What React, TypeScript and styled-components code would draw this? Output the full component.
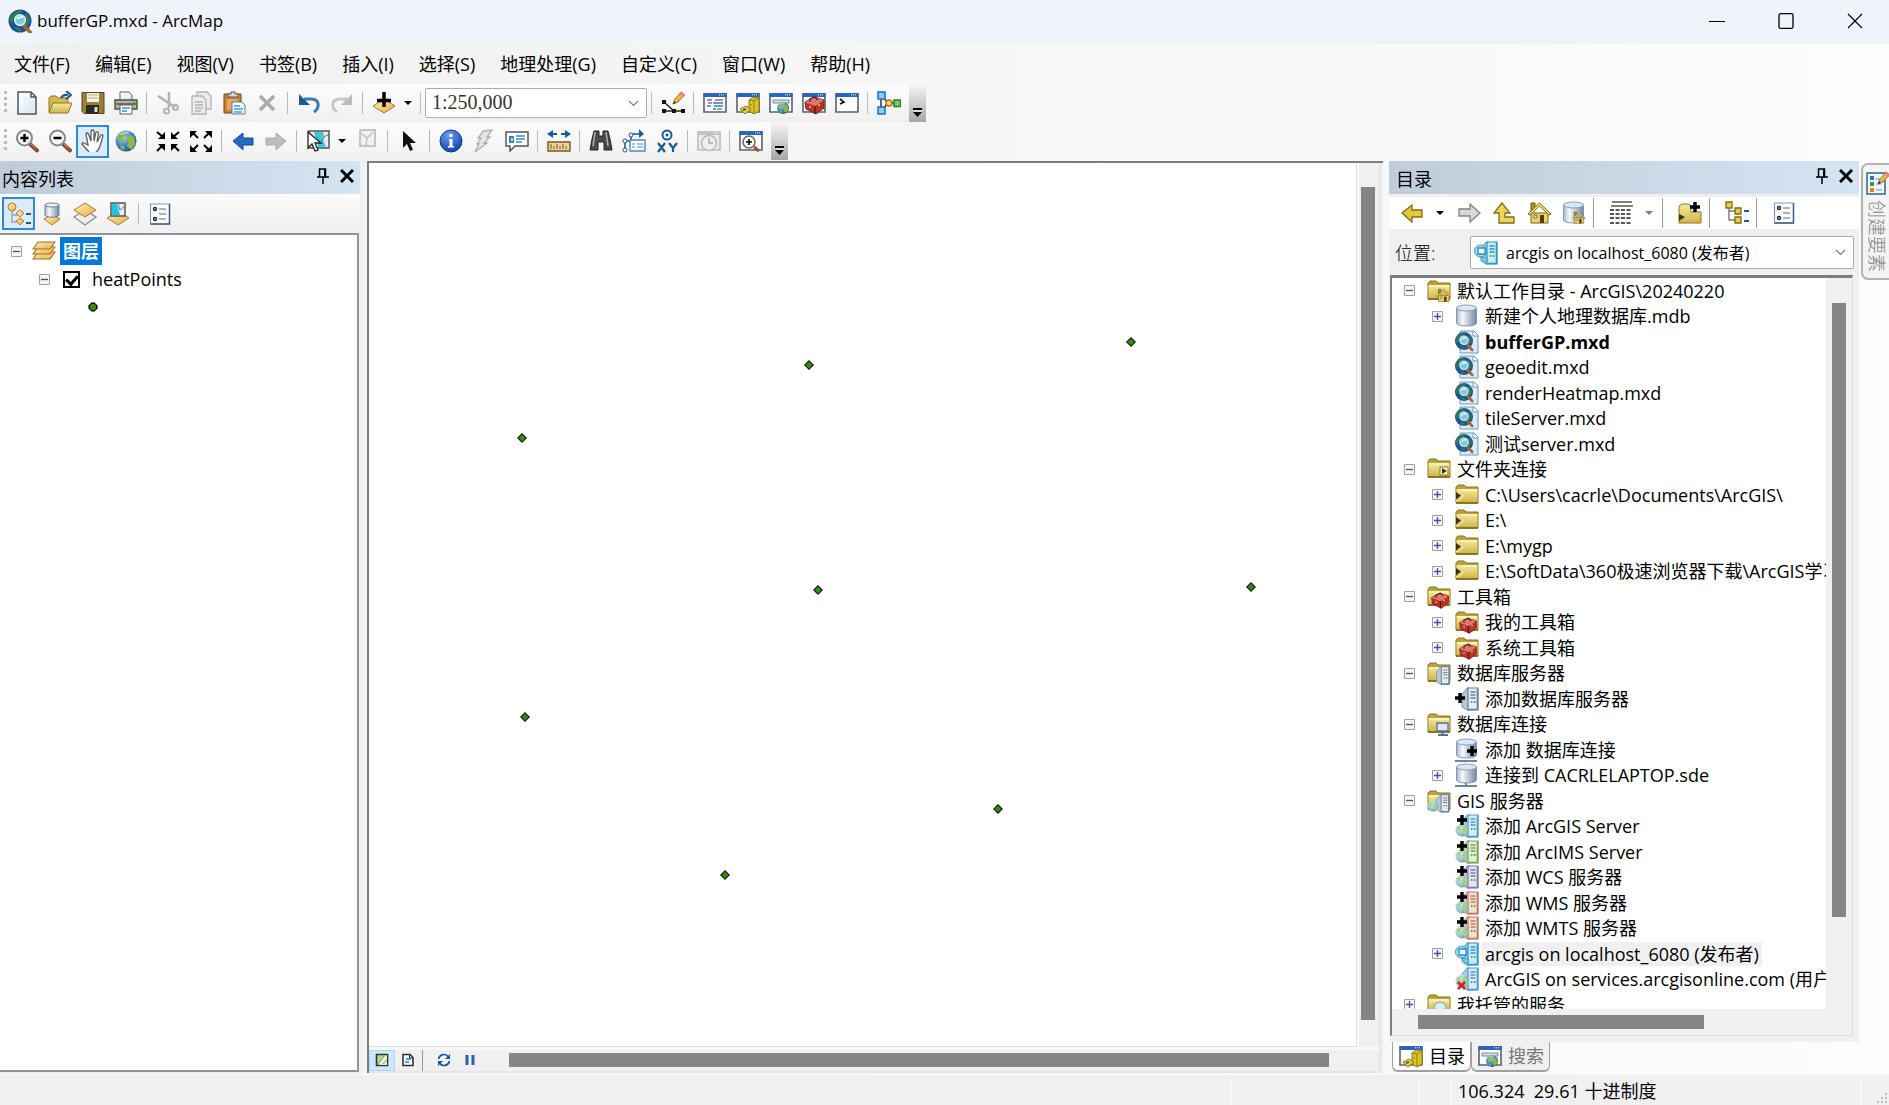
import React, { useState } from "react";
import styled, { createGlobalStyle, css } from "styled-components";

const UI = '"Open Sans", "Noto Sans CJK SC", sans-serif';
const NAVY = "#1c5a96";

const GlobalStyle = createGlobalStyle`
  * { box-sizing: border-box; }
  body { margin: 0; font-family: ${UI}; font-size: 18px; line-height: 24px; color: #000; }
  button, select, input { font: inherit; color: inherit; margin: 0; }
  svg { display: block; flex: none; }
`;

/* ---------- window chrome ---------- */

const Window = styled.div`
  height: 100vh;
  display: flex;
  flex-direction: column;
  overflow: hidden;
  background: linear-gradient(to right, #f0f0f0, #fcfcfc);
`;

const TitleBar = styled.header`
  height: 44px;
  flex: none;
  display: flex;
  align-items: center;
  padding: 0 0 3px 8px;
  background: #f0f3fb;
`;

const Title = styled.h1`
  flex: 1;
  margin: 0 0 0 5px;
  font-size: 17px;
  font-weight: 400;
`;

const WindowButton = styled.button`
  width: 69px;
  height: 40px;
  padding: 0;
  border: 0;
  background: none;
  display: flex;
  align-items: center;
  justify-content: center;
`;

const MenuBar = styled.nav`
  height: 40px;
  flex: none;
  display: flex;
  align-items: center;
  gap: 1px;
  padding-left: 2px;
`;

const MenuButton = styled.button`
  height: 36px;
  padding: 0 12px;
  border: 0;
  background: none;
  white-space: nowrap;
`;

/* ---------- toolbars ---------- */

const ToolbarArea = styled.div`
  flex: none;
  display: flex;
  flex-direction: column;
  align-items: flex-start;
  padding-bottom: 1px;
`;

const Toolbar = styled.div`
  height: 38px;
  display: flex;
  align-items: center;
  padding-left: 4px;
  background: linear-gradient(#fbfbfb, #fafafa 30%, #efefef);
`;

const Grip = styled.span`
  width: 3px;
  height: 24px;
  margin-right: 3px;
  background: repeating-linear-gradient(#bdbdbd 0 3px, transparent 3px 6px);
`;

const ToolButton = styled.button<{ $on?: boolean; $wide?: boolean }>`
  width: ${(p) => (p.$wide ? 35 : 33)}px;
  height: 33px;
  flex: none;
  padding: 0;
  display: flex;
  align-items: center;
  justify-content: center;
  border: 2px solid ${(p) => (p.$on ? "#2b8ae0" : "transparent")};
  background: ${(p) => (p.$on ? "#dcebf7" : "none")};
`;

const CaretButton = styled.button<{ $wide?: boolean; $dim?: boolean }>`
  width: ${(p) => (p.$wide ? 22 : 16)}px;
  height: 33px;
  padding: 0;
  border: 0;
  background: none;
  display: flex;
  align-items: center;
  justify-content: center;
  color: ${(p) => (p.$dim ? "#7c7c7c" : "#000")};
`;

const Separator = styled.span`
  width: 1px;
  height: 22px;
  margin: 0 4px;
  background: #b9b9b9;
`;

const Overflow = styled.button`
  width: 17px;
  height: 38px;
  margin-left: 4px;
  padding: 0 0 4px;
  border: 0;
  display: flex;
  align-items: flex-end;
  justify-content: center;
  background: linear-gradient(#f7f7f7, #a6a6a6);
`;

const ComboFrame = styled.div<{ $scale?: boolean }>`
  position: relative;
  display: flex;
  align-items: center;
  width: ${(p) => (p.$scale ? "222px" : "auto")};
  flex: ${(p) => (p.$scale ? "none" : "1")};
`;

const Combo = styled.select<{ $scale?: boolean }>`
  appearance: none;
  width: 100%;
  height: ${(p) => (p.$scale ? 30 : 33)}px;
  border: 1px solid #adadad;
  border-radius: 2px;
  background: #fff;
  ${(p) =>
    p.$scale
      ? css`
          padding: 0 24px 2px 6px;
          font-family: "Liberation Serif", "Noto Sans CJK SC", serif;
          font-size: 20px;
          color: #333;
        `
      : css`
          padding: 1px 24px 0 35px;
          font-size: 16px;
        `}
`;

const ComboIcon = styled.span`
  position: absolute;
  left: 4px;
  pointer-events: none;
`;

const ComboArrow = styled.span`
  position: absolute;
  right: 8px;
  pointer-events: none;
`;

/* ---------- docked panels ---------- */

const Workspace = styled.div`
  flex: 1;
  min-height: 0;
  display: flex;
`;

const ContentsPanel = styled.aside`
  width: 360px;
  flex: none;
  display: flex;
  flex-direction: column;
  margin-right: 7px;
  background: #f0f0f0;
`;

const CatalogPanel = styled.aside`
  width: 470px;
  flex: none;
  display: flex;
  flex-direction: column;
  margin: 0 2px 0 6px;
`;

const PanelHeader = styled.header<{ $inset?: boolean }>`
  height: 33px;
  flex: none;
  display: flex;
  align-items: center;
  padding: 3px 1px 0 ${(p) => (p.$inset ? 7 : 2)}px;
  background: linear-gradient(to right, #bfcddb, #d5e4f2);
`;

const PanelTitle = styled.h2`
  flex: 1;
  margin: 0;
  font-size: 18px;
  font-weight: 400;
`;

const HeaderButton = styled.button`
  width: 24px;
  height: 28px;
  padding: 0 0 6px;
  border: 0;
  background: none;
  display: flex;
  align-items: center;
  justify-content: center;
`;

const ContentsTools = styled.div`
  height: 39px;
  flex: none;
  display: flex;
  align-items: center;
  padding-left: 2px;
  background: linear-gradient(#fbfbfb, #efefef);
`;

const ContentsTree = styled.ul`
  flex: 1;
  margin: 0 1px 2px 0;
  padding: 2px 0 0;
  list-style: none;
  border: 2px solid #8e939c;
  border-left: 0;
  background: #fff;
`;

const ContentsRow = styled.li<{ $indent: number }>`
  height: 28px;
  display: flex;
  align-items: center;
  padding-left: ${(p) => p.$indent}px;
`;

const Expander = styled.button<{ $gap: number; $hidden?: boolean }>`
  width: 11px;
  height: 11px;
  flex: none;
  padding: 0;
  margin-right: ${(p) => p.$gap}px;
  border: 0;
  background: none;
  visibility: ${(p) => (p.$hidden ? "hidden" : "visible")};
`;

const SelectedLabel = styled.span`
  height: 28px;
  margin-left: 4px;
  padding: 2px 3px;
  background: #0078d7;
  color: #fff;
  font-weight: 700;
`;

const LayerLabel = styled.label`
  display: flex;
  align-items: center;
  gap: 12px;
`;

const LayerCheck = styled.input`
  appearance: none;
  width: 17px;
  height: 17px;
  display: grid;
  place-items: center;
  border: 2px solid #000;
  background: #fff;
  &:checked::before {
    content: "";
    width: 5px;
    height: 9px;
    margin-bottom: 3px;
    border: solid #000;
    border-width: 0 3px 3px 0;
    transform: rotate(42deg);
  }
`;

/* ---------- map view ---------- */

const MapFrame = styled.main`
  flex: 1;
  min-width: 0;
  margin-bottom: 1px;
  display: grid;
  grid-template-columns: 1fr 26px;
  grid-template-rows: 1fr 26px;
  border-left: 2px solid #7d7d7d;
  border-top: 2px solid #7d7d7d;
  background: #f0f0f0;
`;

const MapCanvas = styled.div`
  position: relative;
  overflow: hidden;
  background: #fff;
  border-right: 1px solid #dedede;
  border-bottom: 1px solid #dedede;
`;

const MapPoint = styled.span<{ $x: number; $y: number }>`
  position: absolute;
  left: ${(p) => p.$x}px;
  top: ${(p) => p.$y}px;
`;

const VerticalTrack = styled.div`
  display: flex;
  justify-content: center;
  margin-right: 2px;
  padding: 24px 2px 27px 0;
  border-left: 2px solid #fff;
  border-right: 2px solid #e3e3e3;
`;

const Thumb = styled.div`
  width: 14px;
  background: #858585;
`;

const ViewBar = styled.div`
  grid-column: 1 / 3;
  display: flex;
  align-items: center;
  height: 26px;
  margin-right: 2px;
  padding-bottom: 1px;
  border-top: 3px solid #f8f8f8;
  border-right: 2px solid #e3e3e3;
  border-bottom: 2px solid #e6e6e6;
`;

const ViewButton = styled.button<{ $on?: boolean }>`
  width: 26px;
  height: 21px;
  padding: 0;
  border: 1px solid ${(p) => (p.$on ? "#a6d8ff" : "transparent")};
  background: ${(p) => (p.$on ? "#cce8ff" : "none")};
  display: flex;
  align-items: center;
  justify-content: center;
`;

const ViewSeparator = styled.span`
  width: 1px;
  height: 21px;
  margin: 0 8px 0 1px;
  background: #9a9a9a;
`;

const HorizontalThumb = styled.div`
  flex: 1;
  height: 14px;
  margin: 0 50px 0 26px;
  background: #858585;
`;

/* ---------- catalog ---------- */

const CatalogBody = styled.div`
  flex: 1;
  min-height: 0;
  display: flex;
  flex-direction: column;
  padding-bottom: 6px;
  background: #f0f0f0;
`;

const CatalogTools = styled.div`
  height: 32px;
  flex: none;
  display: flex;
  align-items: center;
  margin-top: 3px;
  padding-left: 5px;
  background: #fff;
`;

const CatalogSeparator = styled.span`
  width: 1px;
  height: 30px;
  margin: 0 9px 0 2px;
  background: #9a9a9a;
`;

const LocationRow = styled.div`
  height: 46px;
  flex: none;
  display: flex;
  align-items: center;
  padding: 1px 5px 0 6px;
`;

const LocationLabel = styled.label`
  width: 75px;
  font-weight: 300;
`;

const CatalogFrame = styled.div`
  flex: 1;
  min-height: 0;
  margin: 0 6px 0 1px;
  display: grid;
  grid-template-columns: 1fr 26px;
  grid-template-rows: 1fr 26px;
  border: solid;
  border-width: 3px 1px 1px 2px;
  border-color: #7d7d7d #dedede #dedede #7d7d7d;
`;

const CatalogTree = styled.ul`
  min-width: 0;
  min-height: 0;
  margin: 0;
  padding: 0 0 0 12px;
  overflow: hidden;
  list-style: none;
  background: #fff;
`;

const CatalogRow = styled.li<{ $level: number }>`
  height: 25px;
  display: flex;
  align-items: center;
  padding-left: ${(p) => p.$level * 28}px;
  white-space: nowrap;
  &:nth-child(even) { height: 26px; }
`;

const RowLabel = styled.span<{ $bold?: boolean; $marked?: boolean }>`
  margin-left: 3px;
  padding: 0 3px;
  font-weight: ${(p) => (p.$bold ? 700 : 400)};
  background: ${(p) => (p.$marked ? "#f0f0f0" : "none")};
`;

const TreeTrack = styled.div`
  display: flex;
  justify-content: center;
  padding: 25px 0 92px;
`;

const TreeBottomTrack = styled.div`
  grid-column: 1 / 3;
  display: flex;
  align-items: center;
  padding: 0 148px 0 26px;
`;

const TreeBottomThumb = styled.div`
  flex: 1;
  height: 14px;
  background: #858585;
`;

const Tabs = styled.div`
  height: 32px;
  flex: none;
  display: flex;
  padding: 0 0 2px 3px;
`;

const Tab = styled.button<{ $on?: boolean }>`
  width: 79px;
  padding: 0 0 0 6px;
  display: flex;
  align-items: center;
  gap: 6px;
  border: 1px solid #a0a0a0;
  border-top: 0;
  border-bottom-width: 2px;
  border-radius: 0 0 6px 6px;
  background: ${(p) => (p.$on ? "#fff" : "#f0f0f0")};
  color: ${(p) => (p.$on ? "#000" : "#777")};
  white-space: nowrap;
`;

const SideStrip = styled.div`
  width: 28px;
  flex: none;
  padding-top: 2px;
`;

const SideTab = styled.button`
  width: 100%;
  height: 117px;
  padding: 6px 0 0 3px;
  display: flex;
  flex-direction: column;
  align-items: flex-start;
  gap: 5px;
  border: 2px solid #b2b2b2;
  border-right: 0;
  border-radius: 7px 0 0 7px;
  background: #f4f4f4;
  color: #808080;
`;

const SideText = styled.span`
  writing-mode: vertical-rl;
  text-orientation: sideways;
  line-height: 22px;
  font-weight: 300;
  white-space: nowrap;
`;

/* ---------- status bar ---------- */

const StatusBar = styled.footer`
  height: 31px;
  flex: none;
  display: flex;
  align-items: flex-end;
  background: #f0f0f0;
  border-top: 1px solid #f8f8f8;
`;

const StatusCell = styled.span<{ $width?: number }>`
  width: ${(p) => (p.$width ? `${p.$width}px` : "auto")};
  flex: ${(p) => (p.$width ? "none" : "1")};
  height: 26px;
  padding-left: 6px;
  border-right: 2px solid #f7f7f7;
  white-space: pre;
`;

const GripCell = styled.span`
  width: 27px;
  padding-left: 5px;
`;

/* ---------- icons ---------- */

const DefsSvg = styled.svg`
  position: absolute;
`;

const Svg = ({ children, s = 24, v = 24 }: { children: React.ReactNode; s?: number; v?: number }) => (
  <svg width={s} height={s} viewBox={`0 0 ${v} ${v}`} fill="none" aria-hidden="true">
    {children}
  </svg>
);

const Defs = () => (
  <DefsSvg width="0" height="0" aria-hidden="true">
    <defs>
      <radialGradient id="globe" cx="0.35" cy="0.3" r="0.8">
        <stop offset="0" stopColor="#a4dcf7" />
        <stop offset="0.5" stopColor="#4487cb" />
        <stop offset="1" stopColor="#1b4d8c" />
      </radialGradient>
      <radialGradient id="paleglobe" cx="0.35" cy="0.3" r="0.8">
        <stop offset="0" stopColor="#e3f4fb" />
        <stop offset="0.6" stopColor="#8fc1e0" />
        <stop offset="1" stopColor="#5b8fb8" />
      </radialGradient>
      <radialGradient id="blueball" cx="0.4" cy="0.25" r="0.8">
        <stop offset="0" stopColor="#6f9ff0" />
        <stop offset="1" stopColor="#0d3cae" />
      </radialGradient>
      <linearGradient id="gold" x1="0" y1="0" x2="0" y2="1">
        <stop offset="0" stopColor="#f5eaa0" />
        <stop offset="1" stopColor="#cfb54a" />
      </linearGradient>
      <linearGradient id="amber" x1="0" y1="0" x2="1" y2="1">
        <stop offset="0" stopColor="#fff0bd" />
        <stop offset="1" stopColor="#e9ac45" />
      </linearGradient>
      <linearGradient id="steel" x1="0" y1="0" x2="1" y2="0">
        <stop offset="0" stopColor="#a7b6cd" />
        <stop offset="0.3" stopColor="#f6f9fd" />
        <stop offset="1" stopColor="#7486a4" />
      </linearGradient>
      <linearGradient id="page" x1="0" y1="0" x2="1" y2="1">
        <stop offset="0" stopColor="#fff" />
        <stop offset="1" stopColor="#d3e6f5" />
      </linearGradient>
    </defs>
  </DefsSvg>
);

const Globe = ({ x = 12, y = 12, r = 10.5, pale }: { x?: number; y?: number; r?: number; pale?: boolean }) => (
  <g transform={`translate(${x} ${y}) scale(${r / 10})`}>
    <circle r="10" fill={pale ? "url(#paleglobe)" : "url(#globe)"} />
    <path
      d="M-8-4Q-4-9 1-8L0-5-3-3-2 0-5 2-7-1ZM3-6Q7-6 8-2L9 3 5 8 1 5 2 1-1-1 2-4ZM-6 4-2 5-1 8-4 8Z"
      fill={pale ? "#a9cf86" : "#86b94a"}
    />
    <path d="M-5-6Q-1-9 3-8" stroke="#fff" opacity=".5" strokeWidth="1.5" />
  </g>
);

const Magnifier = () => (
  <>
    <path d="m15.5 15.5 6.5 6" stroke="#8d4a32" strokeWidth="4" strokeLinecap="round" />
    <path d="m16 15 5 4.5" stroke="#d79a7c" strokeWidth="1" />
    <circle cx="9.5" cy="9" r="7.5" fill="#f4f6f7" stroke="#868b8d" strokeWidth="2" />
  </>
);

const MiniWindow = ({ dim }: { dim?: boolean }) => (
  <>
    <path d="M1 3h22v18H1Z" fill={dim ? "#ececec" : "#fff"} stroke={dim ? "#bcbcbc" : "#5d6269"} strokeWidth="1.6" />
    <path d="M.5 2h23v4H.5Z" fill={dim ? "#c2c2c2" : "#2c63bd"} />
    <path d="M16 3.8h6" stroke="#fff" strokeDasharray="1 1" />
  </>
);

const Cabinet = () => (
  <>
    <path d="m13 9 4-3 6 1v13l-5 3-5-3Z" fill="#dcc329" stroke="#8a7912" />
    <path d="m13 9 5 1 5-3M18 10v13M15 13v2" stroke="#94820f" />
    <path d="m4 18 6-3 5 3-6 5Z" fill="#e6d23a" stroke="#8a7912" />
    <path d="m7 19 3-1" stroke="#444" strokeWidth="1.5" />
  </>
);

const RedBox = ({ x = 0, y = 0, k = 1 }: { x?: number; y?: number; k?: number }) => (
  <g transform={`translate(${x} ${y}) scale(${k})`}>
    <path d="m3 11 9-5 10 3v8l-8 6-10-5Z" fill="#b93329" stroke="#7c1d17" />
    <path d="m3 11 10 4 9-6-10-3Z" fill="#e0796d" />
    <path d="M13 15v8M8 11V8l5-2 3 3" stroke="#4a1b18" strokeWidth="1.3" />
    <path d="M8 15v2M17 13v2" stroke="#f3c5bf" strokeWidth="1.3" />
  </g>
);

const Folder = ({ open }: { open?: boolean }) => (
  <>
    <path d="M1 5V4l2-2h6l2 2h12v16H1Z" fill="#bba339" stroke="#85721f" />
    <path d="M1.5 9.5V6h21v13.5h-21Z" fill="url(#gold)" />
    <path d={open ? "M7 7h15" : "M2 7h20"} stroke="#fff9c9" strokeWidth="1.5" />
    <path d="M1 20h22" stroke="#7a681b" strokeWidth="1.6" />
  </>
);

const Server = ({ tint = "#4f98cc", fill = "#d8edfb" }: { tint?: string; fill?: string }) => (
  <>
    <path d="m7 7 5-6h3v22h-3l-5-3Z" fill={fill} stroke={tint} strokeWidth=".8" />
    <path d="m7 7 5-6h3v22h-3l-5-3Z" fill={tint} opacity=".35" />
    <path d="M13 1h10v22H13Z" fill={fill} stroke={tint} strokeWidth="1.2" />
    <path d="M22.5 1.5v21M13 22.5h10" stroke={tint} strokeWidth="1.6" />
    <path d="M15.500 5h5M15.500 8h5M15.500 11h5" stroke={tint} strokeWidth="1.3" />
    <path d="M16 15h1.500M19 15h1.500" stroke="#3aab3a" strokeWidth="2" />
  </>
);

const Plus = ({ x, y, r = 5 }: { x: number; y: number; r?: number }) => (
  <path d={`M${x - r} ${y}h${r * 2}M${x} ${y - r}v${r * 2}`} stroke="#000" strokeWidth="3.400" />
);

const Cylinder = ({ h = 22 }: { h?: number }) => (
  <>
    <path d={`M1.5 4v${h - 7}c0 4 20 4 20 0V4Z`} fill="url(#steel)" stroke="#8495ae" />
    <ellipse cx="11.5" cy="4" rx="10" ry="3" fill="#dce6f3" stroke="#8a9bb4" />
  </>
);

const House = ({ x = 0, y = 0, k = 1 }: { x?: number; y?: number; k?: number }) => (
  <g transform={`translate(${x} ${y}) scale(${k})`}>
    <path d="M4 11V2h4v6" fill="#b08c2c" stroke="#6d5712" />
    <path d="M4 12h17v10H4Z" fill="#ead168" stroke="#796412" />
    <path d="M1 13 12.5 2 24 13l-2 1-9.500-9L3 14Z" fill="#f4df86" stroke="#796412" />
    <path d="M13 14h4v8h-4Z" fill="#4e3c0c" />
    <path d="M7 14h3v3H7Z" fill="#fff" stroke="#796412" />
  </g>
);

const Diamond = ({ y = 0 }: { y?: number }) => (
  <path d={`M1 ${10 + y} 12 ${3 + y} 23 ${10 + y} 12 ${17 + y}Z`} fill="url(#amber)" stroke="#a87b2c" />
);

const Doc = () => (
  <>
    <path d="M5 1h14l4 4v18H5Z" fill="#d9ecf7" stroke="#6b99b5" />
    <path d="M18 1v5h5" fill="#fff" stroke="#6b99b5" />
  </>
);

const ArcGlobe = ({ x = 12, y = 12, r = 11.5 }: { x?: number; y?: number; r?: number }) => (
  <g transform={`translate(${x} ${y}) scale(${r / 12})`}>
    <circle r="12" fill="#1a5393" />
    <path d="M-10-5Q-5-12 3-11L0-8-7-2-8 4Q-12 1-10-5ZM6-9Q11-5 10 2L6 6 5 0ZM-6 6 1 8 2 11Q-3 11-6 6Z" fill="#2f7a5e" />
    <path d="m4 5 7 7" stroke="#a8623a" strokeWidth="3.5" strokeLinecap="round" />
    <circle cx="0" cy="-1" r="5.500" fill="#7cc9e2" stroke="#d5e8f0" strokeWidth="1.8" />
    <path d="M-3-2Q-1-5 3-4" stroke="#fff" strokeWidth="1.6" />
  </g>
);

const Pencil = () => (
  <>
    <path d="m12 13 2-5 6-7 3.5 3-6.500 7Z" fill="#edb64b" stroke="#9c7430" />
    <path d="m18.500 2.500 2-2 3.500 3-2 2Z" fill="#e5817a" />
    <path d="m12 13 1-3 2 2Z" fill="#333" />
  </>
);

const ListDoc = () => (
  <>
    <path d="M2.500 2h19v20h-19Z" fill="#fbfcfe" stroke="#8799b0" strokeWidth="1.2" />
    <path d="M21.500 2v20h-19" stroke="#3f5b80" strokeWidth="1.4" />
    <circle cx="7" cy="7" r="1.500" stroke="#222" strokeWidth="1.4" />
    <circle cx="7" cy="17" r="1.500" stroke="#222" strokeWidth="1.4" />
    <path d="M11 7h7M11 12h7M11 17h7" stroke="#8c9aae" strokeWidth="1.4" />
  </>
);

const ArcServer = ({ tint, fill }: { tint: string; fill: string }) => (
  <>
    <Server tint={tint} fill={fill} />
    <Globe x={7} y={16} r={6.5} pale />
    <Plus x={7} y={6} />
  </>
);

const Publisher = () => (
  <>
    <Server tint="#2f96c8" fill="#c9ecfb" />
    <circle cx="6.500" cy="10" r="6" fill="#9fdaf0" stroke="#3b9cc8" />
    <path d="M4 7h7v6H4Z" fill="#f0fbff" stroke="#2c8cba" strokeWidth="1.3" />
    <path d="m6 16 5 5h2v-4Z" fill="#8fd0ea" stroke="#3b9cc8" />
  </>
);

const icons: Record<string, React.ReactNode> = {
  app: <ArcGlobe />,
  new: <path d="M3 1h13l5 5v17H3Z M16 1v5h5" fill="url(#page)" stroke="#4e565e" strokeWidth="1.5" />,
  open: (
    <>
      <path d="M1 21V7l2-2h5l2 2h10v14Z" fill="#d6bb4c" stroke="#8c7626" />
      <path d="m1 22 4-10h19l-4 10Z" fill="url(#gold)" stroke="#8c7626" />
      <path d="M13 7q2-4 7-3M18 0l5 4-5 4" stroke={NAVY} strokeWidth="2.2" />
    </>
  ),
  save: (
    <>
      <path d="M1 1.500h22v21H3l-2-2Z" fill="#9a8034" stroke="#4f4423" />
      <path d="M6 2h12v9H6Z" fill="#f4f1df" />
      <path d="M7 4h10M7 7h10" stroke="#b8b49d" />
      <path d="M5 14h13v8.500H5Z" fill="#27282a" />
      <path d="M13.500 16h3v5h-3Z" fill="#ddd" />
    </>
  ),
  print: (
    <>
      <path d="M6 10V1h9l3 3v6Z" fill="url(#page)" stroke="#59616a" />
      <path d="M1 9h22v9H1Z" fill="#b7b79f" stroke="#50513f" strokeWidth="1.4" />
      <path d="M1 13h22" stroke="#6b6c59" strokeWidth="2" />
      <path d="M6 14h12v9H6Z" fill="#fff" stroke="#59616a" />
      <path d="M8 17h8M8 20h5" stroke="#3b8bd0" strokeWidth="1.5" />
      <path d="M19 11h2" stroke="#44c044" strokeWidth="1.5" />
    </>
  ),
  cut: (
    <g stroke="#b3b3b3" strokeWidth="2">
      <path d="M13 1v16M2 5l17 11" strokeWidth="2.500" />
      <circle cx="10.500" cy="20" r="2.500" />
      <circle cx="19.500" cy="16.500" r="2.500" />
    </g>
  ),
  copy: (
    <g fill="#ececec" stroke="#b3b3b3" strokeWidth="1.3">
      <path d="M8 1h10l4 4v13H8Z" />
      <path d="M3 5h10l4 4v14H3Z" />
      <path d="M6 11h8M6 14h8M6 17h8M6 20h6" />
    </g>
  ),
  paste: (
    <>
      <path d="M2 3h17v19H2Z" fill="#c8803a" stroke="#75461b" />
      <path d="M6 6V3h3V1h4v2h3v3Z" fill="#d8dadd" stroke="#54585c" />
      <path d="M5 8h11v11H5Z" fill="#e3a868" />
      <path d="M10 11h10l3 3v9H10Z" fill="#f4faff" stroke="#4e7ea8" />
      <path d="M12 15h6M12 18h9M12 21h8" stroke="#4a98d4" strokeWidth="1.3" />
    </>
  ),
  remove: <path d="m5 5 14 14M19 5 5 19" stroke="#a9a9a9" strokeWidth="3.500" />,
  undo: (
    <>
      <path d="M7 8h7c9 0 9 9 3 13" stroke="#3d79b5" strokeWidth="3" />
      <path d="M2 3v11h11Z" fill={NAVY} />
    </>
  ),
  redo: (
    <>
      <path d="M17 8h-7c-9 0-9 9-3 13" stroke="#c6c6c6" strokeWidth="3" />
      <path d="M22 3v11H11Z" fill="#bcbcbc" />
    </>
  ),
  addData: (
    <>
      <Diamond y={5} />
      <path d="M5 9.500h14M12 1v15" stroke="#000" strokeWidth="3.500" />
    </>
  ),
  editor: (
    <>
      <path d="M3 11 13 20M3 20h20" stroke="#222" strokeWidth="1.5" />
      <path d="M1 9h4v4H1ZM1 18h4v4H1ZM11 18h4v4h-4ZM20 18h4v4h-4Z" fill="#111" />
      <Pencil />
    </>
  ),
  toc: (
    <>
      <MiniWindow />
      <path d="M4 9h5M10 12h10M4 15h4M11 15h9M10 18h3" stroke="#2d7bc6" strokeWidth="1.5" />
      <path d="M12 9h8M5 12h4" stroke="#d65050" strokeWidth="1.5" />
      <path d="M14 18h5" stroke="#4aa84a" strokeWidth="1.5" />
    </>
  ),
  catalog: (
    <>
      <MiniWindow />
      <Cabinet />
    </>
  ),
  search: (
    <>
      <MiniWindow />
      <path d="M4 9h16v3H4Z" fill="#d9e0e8" stroke="#7e8997" />
      <Globe x={14} y={17} r={6} />
    </>
  ),
  toolbox: (
    <>
      <MiniWindow />
      <RedBox />
    </>
  ),
  python: (
    <>
      <MiniWindow />
      <path d="m5 8 4 3-4 2" stroke="#111" strokeWidth="1.6" />
    </>
  ),
  model: (
    <>
      <path d="M4 5v14M5 5l6 7h9M5 19l6-7" stroke="#333" strokeWidth="1.5" />
      <path d="M1 1h7v7H1ZM1 16h7v7H1Z" fill="#8cc8f2" stroke="#1f6fb4" strokeWidth="1.5" />
      <circle cx="12" cy="12" r="3" fill="#ffdc60" stroke="#a5781a" strokeWidth="1.5" />
      <path d="M17 9h6.500v6.500H17Z" fill="#7dd06a" stroke="#2d7d24" strokeWidth="1.5" />
    </>
  ),
  zoomIn: (
    <>
      <Magnifier />
      <path d="M5.500 9h8M9.500 5v8" stroke="#000" strokeWidth="2.500" />
    </>
  ),
  zoomOut: (
    <>
      <Magnifier />
      <path d="M5.500 9h8" stroke="#000" strokeWidth="2.500" />
    </>
  ),
  pan: (
    <path
      d="M8 23 1 15q0-2 2-1l4 2L5 5q1-2 2.500 0L10 12V2q1.500-2 3 0v10l2-9q2-1 2.500 1L16 13l4-7q2-1 2 1l-3 10q-1 4-4 6"
      fill="#fff"
      stroke="#5d5d5d"
      strokeWidth="1.3"
    />
  ),
  globe: <Globe />,
  fixedIn: (
    <>
      <path d="m1 3 6 5M23 3l-6 5M1 22l6-6M23 22l-6-6" stroke="#000" strokeWidth="2" />
      <path d="M9 3v7H2ZM15 3v7h7ZM9 22v-7H2ZM15 22v-7h7Z" fill="#000" />
    </>
  ),
  fixedOut: (
    <>
      <path d="m3 3 6 6M21 3l-6 6M3 22l6-6M21 22l-6-6" stroke="#000" strokeWidth="2" />
      <path d="M1 9V2h7ZM23 9V2h-7ZM1 16v7h7ZM23 16v7h-7Z" fill="#000" />
    </>
  ),
  prev: <path d="M2 12 12 4v5h10v7H12v5Z" fill="#2469bf" stroke="#174a93" />,
  next: <path d="M22 12 12 4v5H2v7h10v5Z" fill="#bcbcbc" stroke="#aeaeae" />,
  select: (
    <>
      <path d="M3 2h20v17H3Z" fill="#e7ebec" stroke="#4f5457" strokeWidth="1.5" />
      <path d="M8 3h8l1 8 3 7h-8Z" fill="#35c7e4" />
      <path d="m16 3 2 5 5-3M18 8l-2 5" stroke="#6d7477" />
      <path d="M2 3v16l4-4 3 7 3-1-3-7h6Z" fill="#fff" stroke="#222" strokeWidth="1.3" />
    </>
  ),
  clear: (
    <>
      <path d="M5 1h15v16H5Z" fill="#f1f1f1" stroke="#b5b5b5" strokeWidth="1.5" />
      <path d="m6 4 6 5 6-6M12 9l-1 8" stroke="#bdbdbd" strokeWidth="1.3" />
    </>
  ),
  pointer: <path d="M6 2v17l4-4 3 7 3-1.500-3-6.500h6Z" fill="#111" />,
  info: (
    <>
      <circle cx="12" cy="12" r="11" fill="url(#blueball)" stroke="#163c8c" />
      <path d="M10 10h3.500v7H15v1.500H9V17h1.500v-5.500H10Z" fill="#fff" />
      <circle cx="12" cy="6.500" r="1.8" fill="#fff" />
    </>
  ),
  bolt: <path d="m11 2 9-1-5 7h3l-6 6h3L3 23l4-8H5l4-6H6Z" fill="#e6e6e6" stroke="#b0b0b0" strokeWidth="1.3" />,
  popup: (
    <>
      <path d="M1 3h22v14H10l-5 5v-5H1Z" fill="#fff" stroke="#51565b" strokeWidth="1.5" />
      <path d="M4 7h5v7H4Z" fill="#377fc4" />
      <path d="M6 9h2v3H6Z" fill="#ffd95b" />
      <path d="M11 7h9M11 10h9M11 13h6" stroke="#3c86c9" strokeWidth="1.4" />
    </>
  ),
  measure: (
    <>
      <path d="M2 5h20" stroke={NAVY} strokeWidth="2" strokeDasharray="8 4" />
      <path d="M0 5 6 1v8ZM24 5l-6-4v8Z" fill={NAVY} />
      <path d="M1 13h22v9H1Z" fill="#eed29c" stroke="#7a5523" strokeWidth="1.4" />
      <path d="M4 15v5M7 17v3M10 15v5M13 17v3M16 15v5M19 17v3" stroke="#7a5523" />
    </>
  ),
  find: (
    <>
      <path d="M5 2h5v5h4V2h5l2 8 2 11h-8v-8h-6v8H1l2-11Z" fill="#4b4b4b" stroke="#222" />
      <path d="M6 3 4 17M17 3l2 14" stroke="#b0b0b0" strokeWidth="1.5" />
    </>
  ),
  route: (
    <>
      <path d="M3 21v-9h6V5h10" stroke={NAVY} strokeWidth="1.6" />
      <path d="m17 0 5 5-5 4Z" fill={NAVY} />
      <circle cx="3" cy="21" r="2" fill="#fff" stroke={NAVY} />
      <circle cx="3" cy="12" r="2" fill="#fff" stroke={NAVY} />
      <circle cx="9" cy="6" r="2" fill="#fff" stroke={NAVY} />
      <path d="M8 11h15v11H8Z" fill="#f5faff" stroke="#5a87b0" strokeWidth="1.4" />
      <path d="M10 15h3M15 15h6M10 18h3M15 18h6" stroke="#5a87b0" />
    </>
  ),
  xy: (
    <>
      <circle cx="12" cy="6" r="4.500" stroke={NAVY} strokeWidth="2" />
      <circle cx="12" cy="6" r="1.500" fill={NAVY} />
      <path d="m3 14 7 9M10 14l-7 9M14 14l4 5 4-5M18 18v5" stroke={NAVY} strokeWidth="2.2" />
    </>
  ),
  time: (
    <>
      <MiniWindow dim />
      <circle cx="12" cy="14" r="7.500" fill="#eee" stroke="#bbb" strokeWidth="1.5" />
      <path d="M12 9v5h4" stroke="#aaa" strokeWidth="1.4" />
    </>
  ),
  viewer: (
    <>
      <MiniWindow />
      <path d="m15 18 5 4" stroke="#9b4e34" strokeWidth="3" />
      <circle cx="10" cy="13" r="6" fill="#f4f6f7" stroke="#666" strokeWidth="1.5" />
      <path d="M7 13h6M10 10v6" stroke="#000" strokeWidth="1.6" />
    </>
  ),
  byOrder: (
    <>
      <path d="M5 6v14h7M5 13h7" stroke="#8fa8bd" strokeWidth="1.4" />
      <circle cx="5" cy="5" r="4" fill="url(#amber)" stroke="#ad822d" />
      <path d="m9 11 4-3 4 3-4 4ZM9 19l4-3 4 3-4 4Z" fill="url(#amber)" stroke="#ad822d" />
      <path d="M19 12h5M19 21h5" stroke={NAVY} strokeWidth="2" />
    </>
  ),
  bySource: (
    <>
      <path d="m4 17 8-4 8 4-8 6Z" fill="url(#amber)" stroke="#a87b2c" />
      <path d="M5 3v10c0 3 14 3 14 0V3Z" fill="url(#steel)" stroke="#70819a" />
      <ellipse cx="12" cy="3" rx="7" ry="2" fill="#e7eef7" stroke="#70819a" />
    </>
  ),
  byVisibility: (
    <>
      <path d="m1 15 11-7 11 7-11 8Z" fill="#eee" stroke="#8c8c8c" strokeWidth="1.3" />
      <Diamond y={-2} />
    </>
  ),
  bySelection: (
    <>
      <Diamond y={6} />
      <path d="M5 1h14v13H5Z" fill="#eceeee" stroke="#50565a" strokeWidth="1.5" />
      <path d="M6 2h5l3 11H6Z" fill="#22c4e6" />
      <path d="m12 2 2 6 5-4" stroke="#777" />
    </>
  ),
  options: <ListDoc />,
  layers: (
    <g fill="url(#amber)" stroke="#a0702a" strokeWidth="1.1">
      <path d="m1 20 5-7h17l-5 7Z" />
      <path d="m1 15 5-7h17l-5 7Z" />
      <path d="m1 10 5-7h17l-5 7Z" />
    </g>
  ),
  backGold: <path d="M2 12 12 4v5h10v7H12v5Z" fill="#e2c83b" stroke="#806c13" strokeWidth="1.3" />,
  forwardGrey: <path d="M23 12 13 3v5H2v7h11v6Z" fill="#d8d8d8" stroke="#838383" strokeWidth="1.3" />,
  upGold: <path d="M10 2 2 12h5v10h15v-6H13v-4h5Z" fill="#ecd65a" stroke="#806c13" strokeWidth="1.3" />,
  home: <House />,
  homeDb: (
    <>
      <Cylinder />
      <House x={10} y={10} k={0.56} />
    </>
  ),
  grid: (
    <>
      <path d="M3 1h20M2 5h22" stroke="#555" strokeWidth="1.5" />
      <path d="M1 9h22M1 13h22M1 17h22M1 22h22" stroke="#555" strokeWidth="2" strokeDasharray="4 1.5" />
    </>
  ),
  newFolder: (
    <>
      <path d="M1 22V5l3-2h7l2 3v5h10v11Z" fill="url(#gold)" stroke="#8b7721" />
      <path d="m1 13 6 3-6 4Z" fill="#3c3510" />
      <Plus x={17} y={6} />
    </>
  ),
  treeView: (
    <>
      <path d="M4 7v12h7M4 10h7" stroke="#777" strokeWidth="1.4" />
      <path d="M1 1h6v6H1ZM10 7h6v6h-6ZM10 16h6v6h-6Z" fill="#e7cb50" stroke="#806c13" strokeWidth="1.3" />
      <path d="M19 10h5M19 20h5" stroke={NAVY} strokeWidth="2" />
    </>
  ),
  create: (
    <>
      <path d="M1 2h18v21H1Z" fill="#eef6fb" stroke="#33637f" strokeWidth="1.5" />
      <path d="M4 5h4v4H4Z" fill="#2f76b5" />
      <path d="M4 11h4v4H4Z" fill="#3c9c47" />
      <path d="M4 17h4v4H4Z" fill="#de7e30" />
      <path d="M10 8h5M10 13h5M10 19h6" stroke="#5c98bf" />
      <Pencil />
    </>
  ),
  folderHome: (
    <>
      <Folder />
      <House x={9} y={9} k={0.62} />
    </>
  ),
  mdb: <Cylinder />,
  mxd: (
    <>
      <Doc />
      <ArcGlobe x={9} y={11} r={9} />
    </>
  ),
  folderGroup: (
    <>
      <Folder />
      <path d="M13 10h8v8h-8Z" fill="#fff8d0" stroke="#8b7721" />
      <path d="m15 11 5 3-5 3Z" fill="#3c3510" />
    </>
  ),
  folder: (
    <>
      <Folder open />
      <path d="m1 9 5 3.500-5 4Z" fill="#3c3510" />
      <path d="M1 18q6-1 7-6" stroke="#fff8d0" />
    </>
  ),
  folderTools: (
    <>
      <Folder />
      <RedBox x={2} y={3} k={0.88} />
    </>
  ),
  folderServer: (
    <>
      <Folder />
      <g transform="translate(4 5) scale(.8)">
        <Server tint="#6c7f9c" fill="#e4ebf4" />
      </g>
    </>
  ),
  addServer: (
    <>
      <Server tint="#6c7f9c" fill="#e4ebf4" />
      <Plus x={5} y={11} />
    </>
  ),
  folderDb: (
    <>
      <Folder />
      <path d="M10 11h11v8H10Z" fill="#dce8f4" stroke="#596f8f" strokeWidth="1.3" />
      <path d="M15.500 19v3M11 23h10" stroke="#596f8f" strokeWidth="2" />
    </>
  ),
  addDb: (
    <>
      <Cylinder h={20} />
      <path d="M0 23h22" stroke="#70839e" strokeWidth="2" />
      <Plus x={17} y={13} />
    </>
  ),
  db: (
    <>
      <Cylinder h={20} />
      <path d="M0 23h22M11 20v3" stroke="#70839e" strokeWidth="2" />
    </>
  ),
  folderGis: (
    <>
      <Folder />
      <g transform="translate(4 5) scale(.78)">
        <Server tint="#6c7f9c" fill="#e4ebf4" />
      </g>
      <Globe x={6} y={17} r={5.5} pale />
    </>
  ),
  arcgis: <ArcServer tint="#4f98cc" fill="#d8edfb" />,
  arcims: <ArcServer tint="#7f9f5b" fill="#e3efd2" />,
  wcs: <ArcServer tint="#7c7ca6" fill="#e4e4f2" />,
  wms: <ArcServer tint="#bb7a66" fill="#f8ddd3" />,
  publisher: <Publisher />,
  offline: (
    <>
      <Server />
      <Globe x={7} y={14} r={6.5} pale />
      <path d="m3 15 7 7M10 15l-7 7" stroke="#d91f26" strokeWidth="2.6" />
    </>
  ),
  folderHosted: (
    <>
      <Folder />
      <circle cx="13" cy="15" r="6" fill="#d9eaf5" stroke="#8b9bab" />
    </>
  ),
};

const Icon = ({ name }: { name: string }) => <Svg>{icons[name]}</Svg>;

const Caret = () => (
  <svg width="8" height="6" viewBox="0 0 8 6" aria-hidden="true">
    <path d="M0 1h8L4 5Z" fill="currentColor" />
  </svg>
);

const Chevron = () => (
  <svg width="11" height="7" viewBox="0 0 11 7" fill="none" aria-hidden="true">
    <path d="m1 1 4.500 4.500L10 1" stroke="#7c7c7c" strokeWidth="1.2" />
  </svg>
);

const PinIcon = () => (
  <svg width="12" height="16" viewBox="0 0 12 16" fill="none" aria-hidden="true">
    <path d="M2.500 9V1h6v8M0 9h12M6 9v7" stroke="#000" strokeWidth="1.5" />
    <path d="M7 1h2v8H7Z" fill="#000" />
  </svg>
);

const CloseIcon = () => (
  <svg width="14" height="14" viewBox="0 0 14 14" fill="none" aria-hidden="true">
    <path d="m1 1 12 12M13 1 1 13" stroke="#000" strokeWidth="3" />
  </svg>
);

const BoxSign = ({ plus }: { plus?: boolean }) => (
  <svg width="11" height="11" viewBox="0 0 11 11" fill="none" aria-hidden="true">
    <path d="M.5.5h10v10H.5Z" fill="#f5f5f5" stroke="#a0a0a0" />
    <path d={plus ? "M2 5.500h7M5.500 2v7" : "M2 5.500h7"} stroke="#3b559c" strokeWidth="1.3" />
  </svg>
);

const PointSymbol = () => (
  <svg width="10" height="10" viewBox="0 0 10 10" aria-hidden="true">
    <path d="M3.500.5h3l3 3v3l-3 3h-3l-3-3v-3Z" fill="#000" />
    <circle cx="5" cy="5" r="3.2" fill="#2f8f0c" />
  </svg>
);

const MapDot = () => (
  <svg width="10" height="10" viewBox="0 0 10 10" aria-hidden="true">
    <path d="M5 0 10 5 5 10 0 5Z" fill="#111" />
    <path d="M5 1.500 8.500 5 5 8.500 1.500 5Z" fill="#2f8f0c" />
  </svg>
);

/* ---------- data ---------- */

const menus = ["文件(F)", "编辑(E)", "视图(V)", "书签(B)", "插入(I)", "选择(S)", "地理处理(G)", "自定义(C)", "窗口(W)", "帮助(H)"];

const standardStart = ["new", "open", "save", "print", "|", "cut", "copy", "paste", "remove", "|", "undo", "redo", "|", "addData", "v", "|"];
const standardEnd = ["|", "editor", "|", "toc", "catalog", "search", "toolbox", "python", "|", "model"];
const mapTools = [
  "zoomIn", "zoomOut", "pan*", "globe", "|", "fixedIn", "fixedOut", "|", "prev", "next", "|", "select", "v", "clear", "|",
  "pointer", "|", "info", "bolt", "popup", "|", "measure", "|", "find", "route", "xy", "|", "time", "|", "viewer",
];
const contentsTools = ["byOrder*", "bySource", "byVisibility", "bySelection", "|", "options"];
const catalogTools = ["backGold", "v", "forwardGrey", "upGold", "home", "homeDb", "|", "grid", "vd", "|", "newFolder", "|", "treeView", "|", "options"];

type Node = { level: number; icon: string; text: string; sign?: "+" | "-"; bold?: boolean; marked?: boolean };

const catalog: Node[] = [
  { level: 0, sign: "-", icon: "folderHome", text: "默认工作目录 - ArcGIS\\20240220" },
  { level: 1, sign: "+", icon: "mdb", text: "新建个人地理数据库.mdb" },
  { level: 1, icon: "mxd", text: "bufferGP.mxd", bold: true },
  { level: 1, icon: "mxd", text: "geoedit.mxd" },
  { level: 1, icon: "mxd", text: "renderHeatmap.mxd" },
  { level: 1, icon: "mxd", text: "tileServer.mxd" },
  { level: 1, icon: "mxd", text: "测试server.mxd" },
  { level: 0, sign: "-", icon: "folderGroup", text: "文件夹连接" },
  { level: 1, sign: "+", icon: "folder", text: "C:\\Users\\cacrle\\Documents\\ArcGIS\\" },
  { level: 1, sign: "+", icon: "folder", text: "E:\\" },
  { level: 1, sign: "+", icon: "folder", text: "E:\\mygp" },
  { level: 1, sign: "+", icon: "folder", text: "E:\\SoftData\\360极速浏览器下载\\ArcGIS学习" },
  { level: 0, sign: "-", icon: "folderTools", text: "工具箱" },
  { level: 1, sign: "+", icon: "folderTools", text: "我的工具箱" },
  { level: 1, sign: "+", icon: "folderTools", text: "系统工具箱" },
  { level: 0, sign: "-", icon: "folderServer", text: "数据库服务器" },
  { level: 1, icon: "addServer", text: "添加数据库服务器" },
  { level: 0, sign: "-", icon: "folderDb", text: "数据库连接" },
  { level: 1, icon: "addDb", text: "添加 数据库连接" },
  { level: 1, sign: "+", icon: "db", text: "连接到 CACRLELAPTOP.sde" },
  { level: 0, sign: "-", icon: "folderGis", text: "GIS 服务器" },
  { level: 1, icon: "arcgis", text: "添加 ArcGIS Server" },
  { level: 1, icon: "arcims", text: "添加 ArcIMS Server" },
  { level: 1, icon: "wcs", text: "添加 WCS 服务器" },
  { level: 1, icon: "wms", text: "添加 WMS 服务器" },
  { level: 1, icon: "wms", text: "添加 WMTS 服务器" },
  { level: 1, sign: "+", icon: "publisher", text: "arcgis on localhost_6080 (发布者)", marked: true },
  { level: 1, icon: "offline", text: "ArcGIS on services.arcgisonline.com (用户)" },
  { level: 0, sign: "+", icon: "folderHosted", text: "我托管的服务" },
];

const points = [
  [435, 197], [757, 174], [148, 270], [444, 422], [877, 419], [151, 549], [624, 641], [351, 707],
];

/* ---------- composed parts ---------- */

const Tools = ({ items, wide }: { items: string[]; wide?: boolean }) => (
  <>
    {items.map((item, i) => {
      if (item === "|") return wide ? <CatalogSeparator key={i} /> : <Separator key={i} />;
      if (item === "v" || item === "vd")
        return (
          <CaretButton key={i} $wide={wide} $dim={item === "vd"} aria-label="more">
            <Caret />
          </CaretButton>
        );
      const name = item.replace("*", "");
      return (
        <ToolButton key={i} $wide={wide} $on={item !== name} aria-label={name}>
          <Icon name={name} />
        </ToolButton>
      );
    })}
  </>
);

const OverflowMark = () => (
  <Overflow aria-label="toolbar options">
    <svg width="9" height="11" viewBox="0 0 9 11" aria-hidden="true">
      <path d="M0 1h9v2H0ZM0 5h9L4.500 10Z" fill="#000" />
      <path d="M1 4h8" stroke="#fff" />
    </svg>
  </Overflow>
);

const PanelBar = ({ title, inset }: { title: string; inset?: boolean }) => (
  <PanelHeader $inset={inset}>
    <PanelTitle>{title}</PanelTitle>
    <HeaderButton aria-label="pin">
      <PinIcon />
    </HeaderButton>
    <HeaderButton aria-label="close">
      <CloseIcon />
    </HeaderButton>
  </PanelHeader>
);

export default function App() {
  const [visible, setVisible] = useState(true);

  return (
    <Window>
      <GlobalStyle />
      <Defs />
      <TitleBar>
        <Icon name="app" />
        <Title>bufferGP.mxd - ArcMap</Title>
        <WindowButton aria-label="minimize">
          <Svg s={16} v={16}><path d="M0 8.500h16" stroke="#000" /></Svg>
        </WindowButton>
        <WindowButton aria-label="maximize">
          <Svg s={16} v={16}><rect x="1" y=".7" width="14" height="14.6" rx="1.5" stroke="#000" strokeWidth="1.3" /></Svg>
        </WindowButton>
        <WindowButton aria-label="close">
          <Svg s={16} v={16}><path d="m1 1 14 14M15 1 1 15" stroke="#000" strokeWidth="1.2" /></Svg>
        </WindowButton>
      </TitleBar>

      <MenuBar>
        {menus.map((m) => (
          <MenuButton key={m}>{m}</MenuButton>
        ))}
      </MenuBar>

      <ToolbarArea>
        <Toolbar>
          <Grip />
          <Tools items={standardStart} />
          <ComboFrame $scale>
            <Combo $scale aria-label="scale" defaultValue="1:250,000">
              <option>1:250,000</option>
            </Combo>
            <ComboArrow>
              <Chevron />
            </ComboArrow>
          </ComboFrame>
          <Tools items={standardEnd} />
          <OverflowMark />
        </Toolbar>
        <Toolbar>
          <Grip />
          <Tools items={mapTools} />
          <OverflowMark />
        </Toolbar>
      </ToolbarArea>

      <Workspace>
        <ContentsPanel>
          <PanelBar title="内容列表" />
          <ContentsTools>
            <Tools items={contentsTools} />
          </ContentsTools>
          <ContentsTree>
            <ContentsRow $indent={11}>
              <Expander $gap={10} aria-label="collapse">
                <BoxSign />
              </Expander>
              <Icon name="layers" />
              <SelectedLabel>图层</SelectedLabel>
            </ContentsRow>
            <ContentsRow $indent={39}>
              <Expander $gap={13} aria-label="collapse">
                <BoxSign />
              </Expander>
              <LayerLabel>
                <LayerCheck type="checkbox" checked={visible} onChange={() => setVisible(!visible)} />
                heatPoints
              </LayerLabel>
            </ContentsRow>
            <ContentsRow $indent={88}>
              <PointSymbol />
            </ContentsRow>
          </ContentsTree>
        </ContentsPanel>

        <MapFrame>
          <MapCanvas>
            {visible &&
              points.map(([x, y]) => (
                <MapPoint key={`${x}-${y}`} $x={x} $y={y}>
                  <MapDot />
                </MapPoint>
              ))}
          </MapCanvas>
          <VerticalTrack>
            <Thumb />
          </VerticalTrack>
          <ViewBar>
            <ViewButton $on aria-label="data view">
              <Svg s={14} v={14}>
                <path d="M1.500 1.500h11v11h-11Z" fill="#b5d887" stroke="#333" strokeWidth="1.6" />
                <path d="m3 11 4-6 5-3v10H7Z" fill="#e6efc3" />
                <path d="m3 11 6-8M8 11l4-4" stroke="#5b9db5" />
              </Svg>
            </ViewButton>
            <ViewButton aria-label="layout view">
              <Svg s={14} v={14}>
                <path d="M2 1.500h7l3 3v8H2Z" fill="#fff" stroke="#333" strokeWidth="1.6" />
                <path d="M5 6h5M4 9h4" stroke="#2d7bc6" strokeWidth="1.6" />
                <path d="M8.500 1v4H12" stroke="#333" />
              </Svg>
            </ViewButton>
            <ViewSeparator />
            <ViewButton aria-label="refresh">
              <Svg s={14} v={14}>
                <path d="M1.500 6a5.500 5.500 0 0 1 10-2M12.500 8a5.500 5.500 0 0 1-10 2" stroke={NAVY} strokeWidth="1.7" />
                <path d="M13 1v5H8ZM1 13V8h5Z" fill={NAVY} />
              </Svg>
            </ViewButton>
            <ViewButton aria-label="pause">
              <Svg s={12} v={12}><path d="M1.500 1h3v10h-3ZM7.500 1h3v10h-3Z" fill="#2a5fb0" /></Svg>
            </ViewButton>
            <HorizontalThumb />
          </ViewBar>
        </MapFrame>

        <CatalogPanel>
          <CatalogBody>
            <PanelBar title="目录" inset />
            <CatalogTools>
              <Tools items={catalogTools} wide />
            </CatalogTools>
            <LocationRow>
              <LocationLabel htmlFor="location">位置:</LocationLabel>
              <ComboFrame>
                <Combo id="location" defaultValue="arcgis">
                  <option value="arcgis">arcgis on localhost_6080 (发布者)</option>
                </Combo>
                <ComboIcon>
                  <Icon name="publisher" />
                </ComboIcon>
                <ComboArrow>
                  <Chevron />
                </ComboArrow>
              </ComboFrame>
            </LocationRow>
            <CatalogFrame>
              <CatalogTree>
                {catalog.map((n) => (
                  <CatalogRow key={n.text} $level={n.level}>
                    <Expander $gap={12} $hidden={!n.sign} aria-label={n.sign === "+" ? "expand" : "collapse"}>
                      <BoxSign plus={n.sign === "+"} />
                    </Expander>
                    <Icon name={n.icon} />
                    <RowLabel $bold={n.bold} $marked={n.marked}>
                      {n.text}
                    </RowLabel>
                  </CatalogRow>
                ))}
              </CatalogTree>
              <TreeTrack>
                <Thumb />
              </TreeTrack>
              <TreeBottomTrack>
                <TreeBottomThumb />
              </TreeBottomTrack>
            </CatalogFrame>
          </CatalogBody>
          <Tabs>
            <Tab $on>
              <Icon name="catalog" />
              目录
            </Tab>
            <Tab>
              <Icon name="search" />
              搜索
            </Tab>
          </Tabs>
        </CatalogPanel>

        <SideStrip>
          <SideTab>
            <Icon name="create" />
            <SideText>创建要素</SideText>
          </SideTab>
        </SideStrip>
      </Workspace>

      <StatusBar>
        <StatusCell />
        <StatusCell $width={188} />
        <StatusCell $width={32} />
        <StatusCell $width={410}>{"106.324  29.61 十进制度"}</StatusCell>
        <GripCell>
          <Svg s={22} v={22}>
            <path d="M18 14h2v2h-2ZM14 18h2v2h-2ZM18 18h2v2h-2ZM18 10h2v2h-2ZM14 14h2v2h-2ZM10 18h2v2h-2Z" fill="#bdbdbd" />
          </Svg>
        </GripCell>
      </StatusBar>
    </Window>
  );
}
